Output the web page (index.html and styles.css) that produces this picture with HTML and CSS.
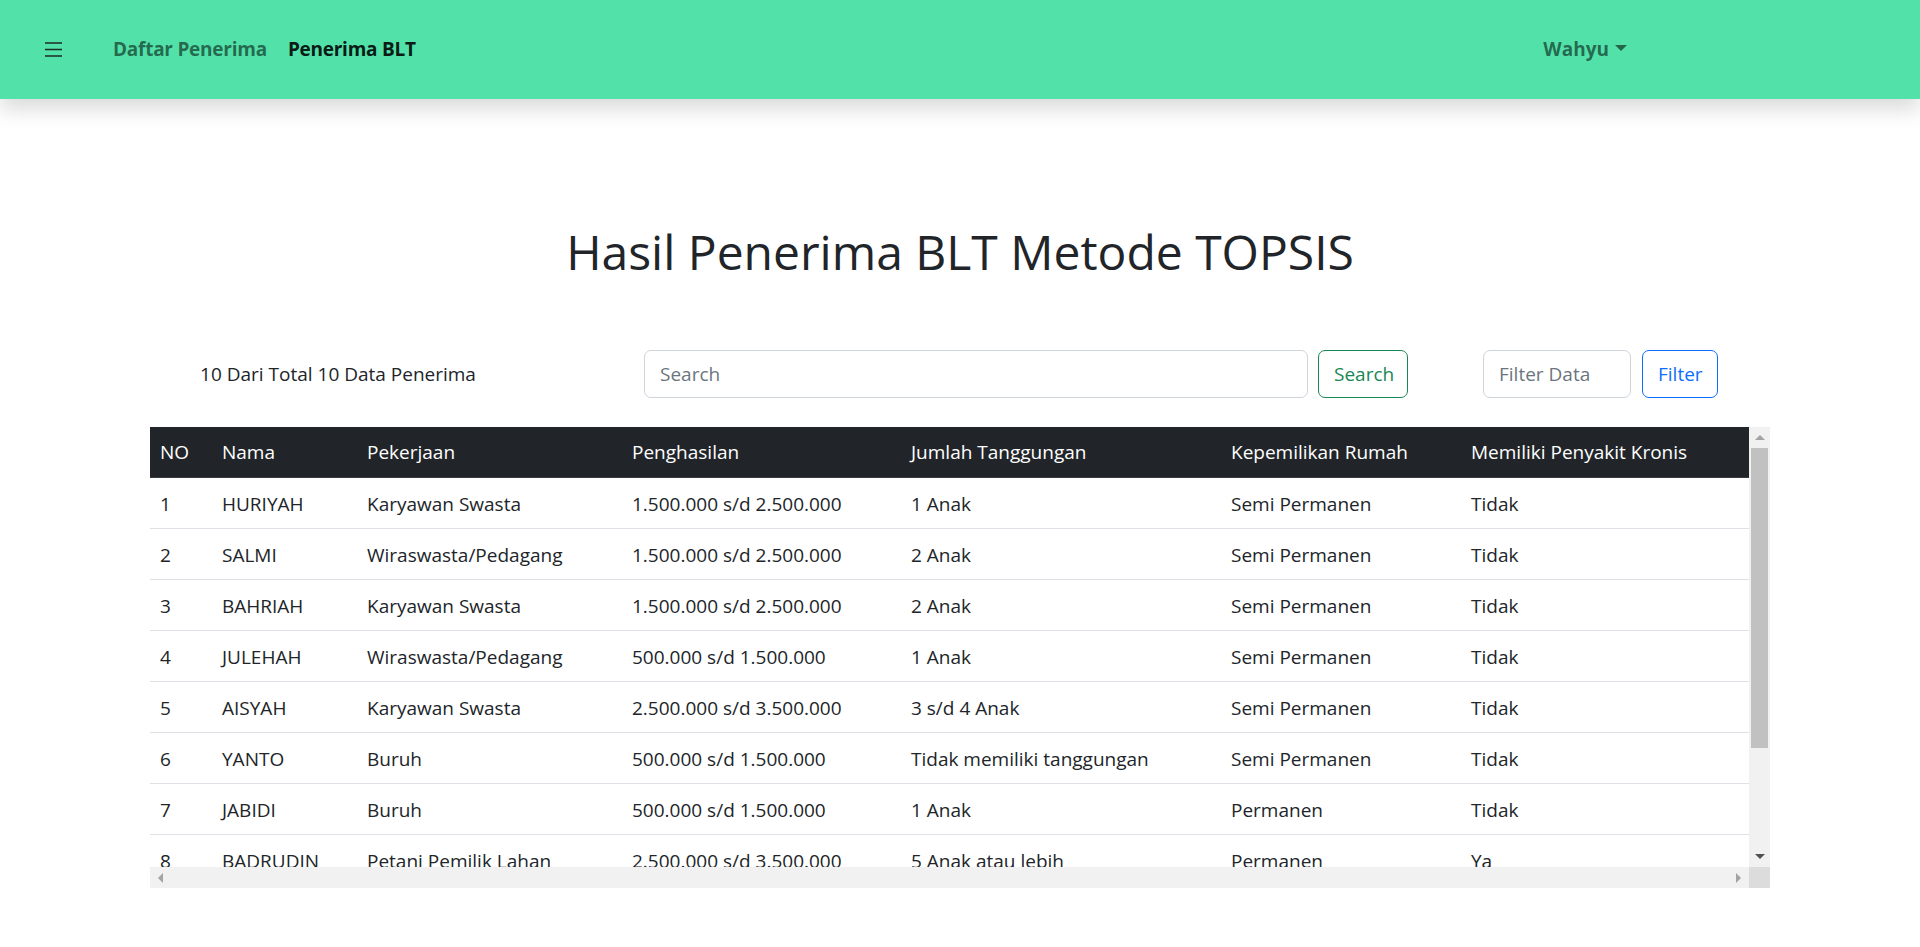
FILE: index.html
```html
<!DOCTYPE html>
<html lang="id">
<head>
<meta charset="utf-8">
<title>Hasil Penerima BLT</title>
<link rel="stylesheet" href="styles.css">
</head>
<body>
<nav class="navbar">
  <span class="toggler" aria-label="menu">
    <svg viewBox="0 0 17 15" width="17" height="15"><path d="M0 1h17M0 7.5h17M0 14h17" stroke="currentColor" stroke-width="1.5" fill="none"/></svg>
  </span>
  <a class="nav-link" href="#">Daftar Penerima</a>
  <a class="nav-link active" href="#">Penerima BLT</a>
  <a class="user" href="#">Wahyu<span class="caret"></span></a>
</nav>

<main class="container">
  <h1 class="title">Hasil Penerima BLT Metode TOPSIS</h1>

  <div class="toolbar">
    <div class="info">10 Dari Total 10 Data Penerima</div>
    <form class="search-form">
      <input class="form-control search-input" type="text" placeholder="Search">
      <button class="btn btn-success-outline" type="button">Search</button>
    </form>
    <form class="filter-form">
      <input class="form-control filter-input" type="text" placeholder="Filter Data">
      <button class="btn btn-primary-outline" type="button">Filter</button>
    </form>
  </div>

  <div class="table-frame">
    <div class="table-viewport">
      <table class="data-table">
        <colgroup>
          <col class="c-no"><col class="c-nama"><col class="c-pek"><col class="c-peng"><col class="c-jml"><col class="c-rumah"><col class="c-sakit">
        </colgroup>
        <thead>
          <tr><th>NO</th><th>Nama</th><th>Pekerjaan</th><th>Penghasilan</th><th>Jumlah Tanggungan</th><th>Kepemilikan Rumah</th><th>Memiliki Penyakit Kronis</th></tr>
        </thead>
        <tbody>
          <tr><td>1</td><td>HURIYAH</td><td>Karyawan Swasta</td><td>1.500.000 s/d 2.500.000</td><td>1 Anak</td><td>Semi Permanen</td><td>Tidak</td></tr>
          <tr><td>2</td><td>SALMI</td><td>Wiraswasta/Pedagang</td><td>1.500.000 s/d 2.500.000</td><td>2 Anak</td><td>Semi Permanen</td><td>Tidak</td></tr>
          <tr><td>3</td><td>BAHRIAH</td><td>Karyawan Swasta</td><td>1.500.000 s/d 2.500.000</td><td>2 Anak</td><td>Semi Permanen</td><td>Tidak</td></tr>
          <tr><td>4</td><td>JULEHAH</td><td>Wiraswasta/Pedagang</td><td>500.000 s/d 1.500.000</td><td>1 Anak</td><td>Semi Permanen</td><td>Tidak</td></tr>
          <tr><td>5</td><td>AISYAH</td><td>Karyawan Swasta</td><td>2.500.000 s/d 3.500.000</td><td>3 s/d 4 Anak</td><td>Semi Permanen</td><td>Tidak</td></tr>
          <tr><td>6</td><td>YANTO</td><td>Buruh</td><td>500.000 s/d 1.500.000</td><td>Tidak memiliki tanggungan</td><td>Semi Permanen</td><td>Tidak</td></tr>
          <tr><td>7</td><td>JABIDI</td><td>Buruh</td><td>500.000 s/d 1.500.000</td><td>1 Anak</td><td>Permanen</td><td>Tidak</td></tr>
          <tr><td>8</td><td>BADRUDIN</td><td>Petani Pemilik Lahan</td><td>2.500.000 s/d 3.500.000</td><td>5 Anak atau lebih</td><td>Permanen</td><td>Ya</td></tr>
          <tr><td>9</td><td>MAHMUD</td><td>Buruh</td><td>500.000 s/d 1.500.000</td><td>2 Anak</td><td>Permanen</td><td>Tidak</td></tr>
          <tr><td>10</td><td>SITI</td><td>Karyawan Swasta</td><td>1.500.000 s/d 2.500.000</td><td>1 Anak</td><td>Permanen</td><td>Tidak</td></tr>
        </tbody>
      </table>
    </div>

    <div class="vbar">
      <span class="sb-btn"><span class="tri tri-up off"></span></span>
      <span class="sb-track"><span class="sb-thumb"></span></span>
      <span class="sb-btn"><span class="tri tri-down"></span></span>
    </div>

    <div class="hbar">
      <span class="sb-btn"><span class="tri tri-left off"></span></span>
      <span class="sb-track"></span>
      <span class="sb-btn"><span class="tri tri-right off"></span></span>
    </div>

    <div class="sb-corner"></div>
  </div>
</main>
</body>
</html>
```

FILE: styles.css
```css
* { box-sizing: border-box; }

body {
  margin: 0;
  font-family: "Open Sans", "Noto Sans", sans-serif;
  font-size: 19px;
  line-height: 1.5;
  color: #212529;
  background: #fff;
}

/* ---------- navbar ---------- */
.navbar {
  height: 99px;
  background: #51e1a9;
  box-shadow: 0 10px 20px rgba(0, 0, 0, 0.15);
  display: flex;
  align-items: center;
  padding-left: 45px;
}

.toggler {
  display: flex;
  color: #1e2b27;
  margin-right: 51px;
}

.nav-link {
  font-weight: 700;
  letter-spacing: -0.25px;
  color: rgba(0, 0, 0, 0.55);
  text-decoration: none;
  margin-right: 21px;
}

.nav-link.active { color: rgba(0, 0, 0, 0.9); }

.user {
  margin-left: auto;
  margin-right: 293px;
  font-weight: 700;
  color: rgba(0, 0, 0, 0.55);
  text-decoration: none;
}

.caret {
  display: inline-block;
  margin-left: 6px;
  vertical-align: 5px;
  border-top: 6px solid;
  border-left: 6px solid transparent;
  border-right: 6px solid transparent;
}

/* ---------- content ---------- */
.container {
  width: 1620px;
  margin: 0 auto;
}

.title {
  margin: 123px 0 68px;
  text-align: center;
  font-size: 48px;
  font-weight: 500;
  line-height: 60px;
}

.toolbar {
  display: flex;
  align-items: center;
  height: 48px;
}

.info {
  width: 376px;
  text-align: center;
}

.search-form,
.filter-form {
  display: flex;
  margin: 0;
}

.search-form { margin-left: 118px; gap: 10px; }
.filter-form { margin-left: 75px; gap: 11px; }

.form-control {
  height: 48px;
  padding: 7px 15px;
  font: inherit;
  color: #212529;
  border: 1px solid #ced4da;
  border-radius: 7px;
  background: #fff;
}

.form-control::placeholder { color: #6c757d; }

.search-input { width: 664px; }
.filter-input { width: 148px; }

.btn {
  height: 48px;
  padding: 7px 15px;
  font: inherit;
  background: #fff;
  border-radius: 7px;
  border: 1px solid;
}

.btn-success-outline { color: #198754; border-color: #198754; width: 90px; }
.btn-primary-outline { color: #0d6efd; border-color: #0d6efd; width: 76px; }

/* ---------- table ---------- */
.table-frame {
  margin-top: 29px;
  display: grid;
  grid-template-columns: 1fr 21px;
  grid-template-rows: 440px 21px;
}

.table-viewport {
  overflow: hidden;
}

.data-table {
  width: 100%;
  border-collapse: collapse;
  table-layout: fixed;
}

.c-no { width: 62px; }
.c-nama { width: 145px; }
.c-pek { width: 265px; }
.c-peng { width: 279px; }
.c-jml { width: 320px; }
.c-rumah { width: 240px; }

.data-table th,
.data-table td {
  padding: 10px;
  line-height: 30px;
  text-align: left;
  white-space: nowrap;
  border-bottom: 1px solid #dee2e6;
}

.data-table td { padding: 11px 10px 9px; }

.data-table th {
  background: #212529;
  color: #fff;
  font-weight: 400;
  border-bottom-color: #373b3e;
}

/* ---------- drawn scrollbars ---------- */
.vbar,
.hbar {
  display: flex;
  background: #f1f1f1;
}

.vbar { flex-direction: column; }

.sb-btn {
  flex: 0 0 21px;
  height: 21px;
  display: flex;
  align-items: center;
  justify-content: center;
}

.sb-track {
  flex: 1;
  display: flex;
  flex-direction: column;
}

.sb-thumb {
  height: 300px;
  margin: 0 2px;
  background: #c1c1c1;
}

.sb-corner { background: #dcdcdc; }

.tri {
  width: 0;
  height: 0;
  border: 0 solid transparent;
}

.tri-up {
  border-width: 0 5px 5px;
  border-bottom-color: #505050;
}

.tri-down {
  border-width: 5px 5px 0;
  border-top-color: #505050;
}

.tri-left {
  border-width: 5px 5px 5px 0;
  border-right-color: #505050;
}

.tri-right {
  border-width: 5px 0 5px 5px;
  border-left-color: #505050;
}

.tri-up.off { border-bottom-color: #a3a3a3; }
.tri-left.off { border-right-color: #a3a3a3; }
.tri-right.off { border-left-color: #a3a3a3; }
```
